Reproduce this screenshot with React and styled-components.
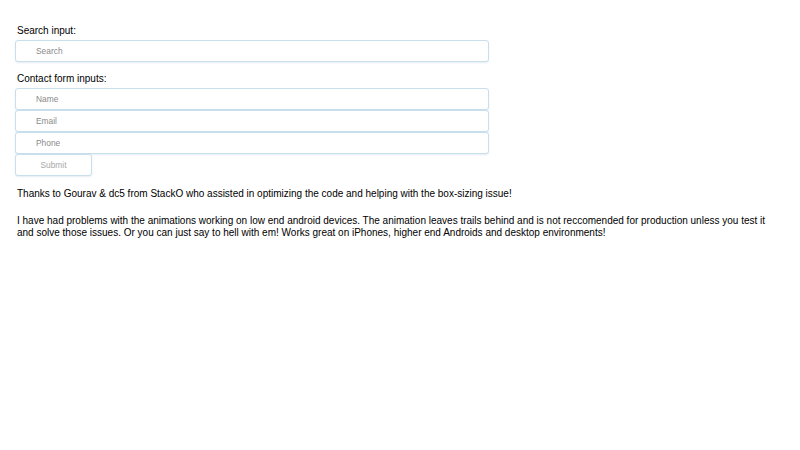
import React from "react";
import styled, { createGlobalStyle } from "styled-components";

const GlobalStyle = createGlobalStyle`
  html, body {
    margin: 0;
    padding: 0;
    background: #fff;
  }
  body {
    font-family: "Liberation Sans", Arial, sans-serif;
    font-size: 10px;
    color: #000;
  }
  * {
    box-sizing: border-box;
  }
`;

const Page = styled.div`
  padding: 25px 15px 0 15px;
`;

const Label = styled.div`
  margin: 0 0 3px 2px;
  line-height: 12px;
`;

const Group = styled.div`
  margin-bottom: ${(p) => p.$gap || 0}px;
`;

const Input = styled.input`
  display: block;
  width: 474px;
  height: 22px;
  margin: 0;
  padding: 0 0 0 20px;
  border: 1px solid #c8dfec;
  border-radius: 3px;
  box-shadow: 0 1px 2px rgba(180, 200, 215, 0.35);
  font-family: "Liberation Sans", Arial, sans-serif;
  font-size: 8.4px;
  color: #555;
  background: #fff;
  outline: none;
  &::placeholder {
    color: #8a8a8a;
  }
`;

const Submit = styled.button`
  display: block;
  width: 77px;
  height: 22px;
  margin: 0;
  padding: 0;
  border: 1px solid #c8dfec;
  border-radius: 3px;
  box-shadow: 0 1px 2px rgba(180, 200, 215, 0.35);
  background: #fff;
  font-family: "Liberation Sans", Arial, sans-serif;
  font-size: 8.4px;
  color: #a8a8a8;
  cursor: pointer;
`;

const Text = styled.p`
  margin: ${(p) => p.$top || 0}px 0 0 2px;
  max-width: 756px;
  line-height: 12.5px;
`;

export default function App() {
  return (
    <>
      <GlobalStyle />
      <Page>
        <Group $gap={11}>
          <Label>Search input:</Label>
          <Input type="text" placeholder="Search" />
        </Group>
        <Group>
          <Label>Contact form inputs:</Label>
          <Input type="text" placeholder="Name" />
          <Input type="email" placeholder="Email" />
          <Input type="tel" placeholder="Phone" />
          <Submit type="submit">Submit</Submit>
        </Group>
        <Text $top={12}>
          Thanks to Gourav &amp; dc5 from StackO who assisted in optimizing the
          code and helping with the box-sizing issue!
        </Text>
        <Text $top={14}>
          I have had problems with the animations working on low end android
          devices. The animation leaves trails behind and is not reccomended for
          production unless you test it and solve those issues. Or you can just
          say to hell with em! Works great on iPhones, higher end Androids and
          desktop environments!
        </Text>
      </Page>
    </>
  );
}
